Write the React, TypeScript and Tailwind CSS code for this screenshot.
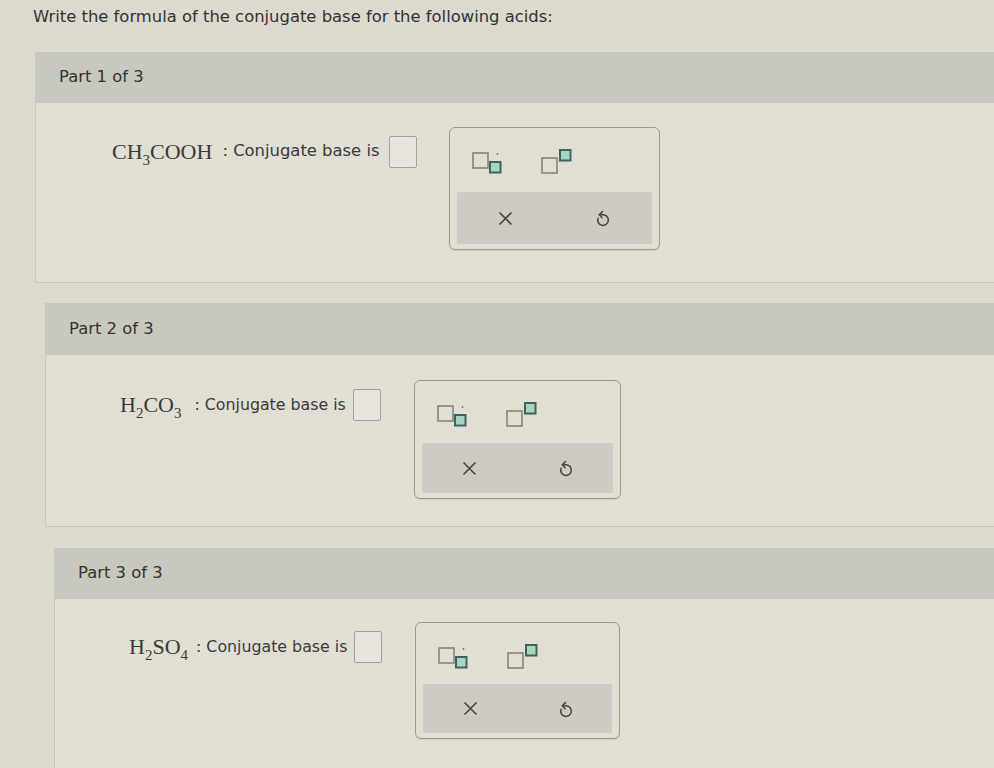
import type { ReactNode } from 'react';

const sans = "font-['DejaVu_Sans','Liberation_Sans',sans-serif]";
const serif = "font-['Liberation_Serif','DejaVu_Serif',serif]";

function Sub({ children }: { children: ReactNode }) {
  return <span className="relative top-[6px] text-[15px] leading-none">{children}</span>;
}

function SubscriptIcon() {
  return (
    <svg width="31" height="24" viewBox="0 0 31 24">
      <rect x="1" y="2" width="15" height="15" fill="none" stroke="#86857c" strokeWidth="1.6" />
      <rect x="18" y="11" width="10.5" height="10.5" fill="#a9d3c2" stroke="#3d6454" strokeWidth="2" />
      <circle cx="25.5" cy="3" r="0.9" fill="#77776f" />
    </svg>
  );
}

function SuperscriptIcon() {
  return (
    <svg width="32" height="26" viewBox="0 0 32 26">
      <rect x="1" y="9" width="15" height="15" fill="none" stroke="#86857c" strokeWidth="1.6" />
      <rect x="19" y="1" width="10.5" height="10.5" fill="#a9d3c2" stroke="#3d6454" strokeWidth="2" />
    </svg>
  );
}

function ClearIcon() {
  return (
    <svg width="15" height="15" viewBox="0 0 15 15">
      <path d="M1.5 1.5 L13.5 13.5 M13.5 1.5 L1.5 13.5" stroke="#474744" strokeWidth="1.6" fill="none" />
    </svg>
  );
}

function UndoIcon() {
  return (
    <svg width="15" height="18" viewBox="0 0 14 17">
      <path
        d="M4.2 5.5 H7.5 A5 5 0 1 1 2.8 8.8"
        stroke="#474744"
        strokeWidth="1.5"
        fill="none"
        strokeLinecap="round"
      />
      <path
        d="M7 2.4 L4 5.5 L6.6 8.3"
        stroke="#474744"
        strokeWidth="1.5"
        fill="none"
        strokeLinecap="round"
        strokeLinejoin="round"
      />
    </svg>
  );
}

function Palette({ size, strip }: { size: string; strip: string }) {
  return (
    <div
      className={`flex flex-col rounded-[6px] border border-[#9b9a91] bg-[#e1ded4] pb-[5px] shadow-[0_1px_1px_rgba(0,0,0,0.08)] ${size}`}
    >
      <div className="flex flex-1 items-start gap-[38px] pl-[22px] pt-[21px]">
        <div className="pt-[2px]">
          <SubscriptIcon />
        </div>
        <SuperscriptIcon />
      </div>
      <div className={`mx-[7px] grid grid-cols-2 items-center rounded-[2px] bg-[#cdcbc2] ${strip}`}>
        <div className="flex justify-center">
          <ClearIcon />
        </div>
        <div className="flex justify-center">
          <UndoIcon />
        </div>
      </div>
    </div>
  );
}

function Part({
  label,
  formula,
  wrap,
  header,
  body,
  row,
  text,
  colon,
  box,
  gap,
  size,
  strip,
}: {
  label: string;
  formula: ReactNode;
  wrap: string;
  header: string;
  body: string;
  row: string;
  text: string;
  colon: string;
  box: string;
  gap: string;
  size: string;
  strip: string;
}) {
  return (
    <section className={wrap}>
      <div className={`flex items-center bg-[#c9c8be] pl-6 text-[16.4px] text-[#333331] ${sans} ${header}`}>{label}</div>
      <div className={`border-b border-l border-[#c8c6bc] bg-[#e1ded4] ${body}`}>
        <div className={`flex items-start ${row}`}>
          <div className="mt-[8px] flex items-center">
            <span className={`text-[22px] text-[#3a3a38] ${serif}`}>{formula}</span>
            <span className={`text-[#3a3a38] ${sans} ${text} ${colon}`}>: Conjugate base is</span>
            <span className={`h-[32px] w-[28px] rounded-[2px] border border-[#9aa49b] bg-[#e6e4dc] ${box}`} />
          </div>
          <div className={gap}>
            <Palette size={size} strip={strip} />
          </div>
        </div>
      </div>
    </section>
  );
}

export default function App() {
  return (
    <main className={`h-[768px] w-[994px] overflow-hidden bg-[#dcd9ce] ${sans}`}>
      <h1 className="pl-[33px] pt-[6px] text-[16.4px] font-normal leading-[22px] text-[#333331]">
        Write the formula of the conjugate base for the following acids:
      </h1>

      <div className="mt-[24px] flex flex-col">
        <Part
          label="Part 1 of 3"
          formula={
            <>
              CH<Sub>3</Sub>COOH
            </>
          }
          wrap="ml-[35px]"
          header="h-[51px]"
          body="h-[180px]"
          row="pl-[76px] pt-[24px]"
          text="text-[16.4px]"
          colon="ml-[10px]"
          box="ml-[9px]"
          gap="ml-[32px]"
          size="h-[123px] w-[211px]"
          strip="h-[52px]"
        />
        <Part
          label="Part 2 of 3"
          formula={
            <>
              H<Sub>2</Sub>CO<Sub>3</Sub>
            </>
          }
          wrap="ml-[45px] mt-[20px]"
          header="h-[52px]"
          body="h-[172px]"
          row="pl-[74px] pt-[25px]"
          text="text-[15.8px]"
          colon="ml-[13px]"
          box="ml-[7px]"
          gap="ml-[33px]"
          size="h-[119px] w-[207px]"
          strip="h-[50px]"
        />
        <Part
          label="Part 3 of 3"
          formula={
            <>
              H<Sub>2</Sub>SO<Sub>4</Sub>
            </>
          }
          wrap="ml-[54px] mt-[21px]"
          header="h-[51px]"
          body="h-[180px]"
          row="pl-[74px] pt-[23px]"
          text="text-[15.8px]"
          colon="ml-[8px]"
          box="ml-[7px]"
          gap="ml-[33px]"
          size="h-[117px] w-[205px]"
          strip="h-[49px]"
        />
      </div>
    </main>
  );
}
